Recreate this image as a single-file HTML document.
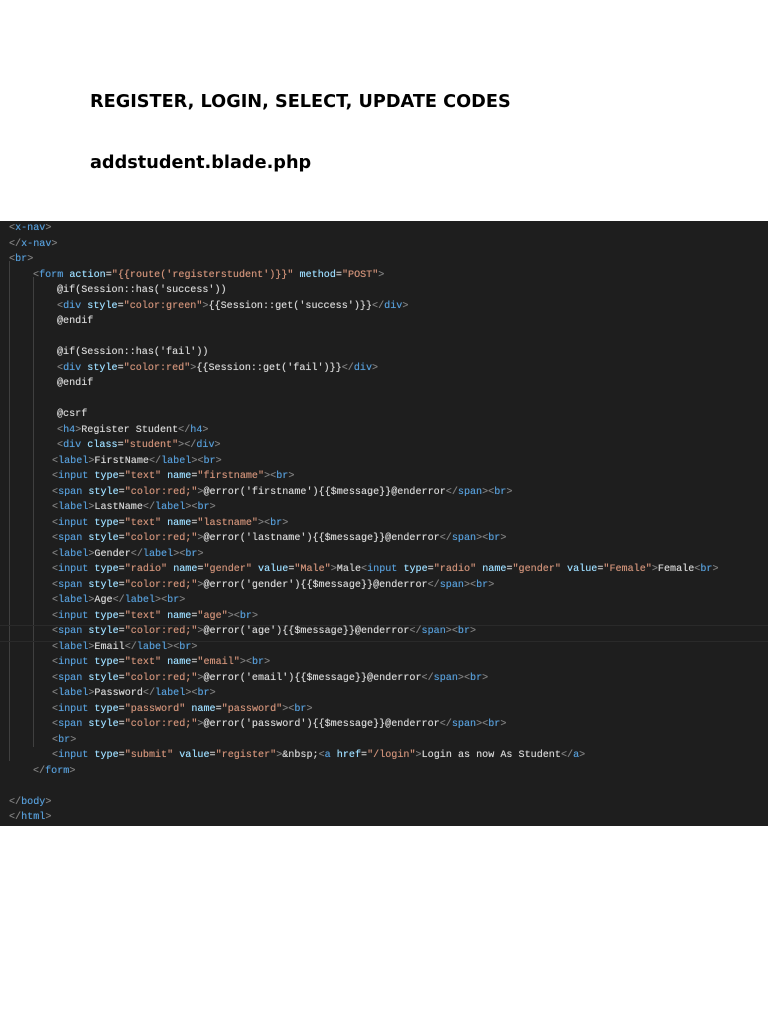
<!DOCTYPE html>
<html><head><meta charset="utf-8"><style>
html,body{margin:0;padding:0;background:#fff;width:768px;height:1024px;overflow:hidden}
h1{position:absolute;left:90px;margin:0;font:bold 17.7px "DejaVu Sans",sans-serif;color:#000;white-space:nowrap}
#code{position:absolute;left:0;top:221px;width:768px;height:605px;background:#1e1e1e;overflow:hidden}
#in{position:absolute;left:0;top:4px;width:768px;height:600px}
.l{position:absolute;height:15.5px;line-height:15.5px;font:10.1px "Liberation Mono",monospace;white-space:pre;color:#d4d4d4;text-shadow:0 0 0.4px currentColor}
.g{position:absolute;width:1px;background:#404040}
.p{color:#808080}.t{color:#569cd6}.a{color:#9cdcfe}.s{color:#ce9178}.w{color:#d4d4d4}
</style></head><body>
<h1 style="top:92px">REGISTER, LOGIN, SELECT, UPDATE CODES</h1>
<h1 style="top:153px">addstudent.blade.php</h1>
<div id="code">
<div id="in">
<div class="g" style="left:9px;top:36px;height:500px"></div>
<div class="g" style="left:33px;top:52px;height:470px"></div>
<div style="position:absolute;left:0;top:400px;width:768px;height:15px;border-top:1px solid #2a2a2a;border-bottom:1px solid #2a2a2a"></div>
<div class="l" style="top:-2px;left:9px"><span class="p">&lt;</span><span class="t">x-nav</span><span class="p">&gt;</span></div>
<div class="l" style="top:13.5px;left:9px"><span class="p">&lt;/</span><span class="t">x-nav</span><span class="p">&gt;</span></div>
<div class="l" style="top:29px;left:9px"><span class="p">&lt;</span><span class="t">br</span><span class="p">&gt;</span></div>
<div class="l" style="top:44.5px;left:33px"><span class="p">&lt;</span><span class="t">form</span> <span class="a">action</span>=<span class="s">"{{route('registerstudent')}}"</span> <span class="a">method</span>=<span class="s">"POST"</span><span class="p">&gt;</span></div>
<div class="l" style="top:60px;left:57px">@if(Session::has('success'))</div>
<div class="l" style="top:75.5px;left:57px"><span class="p">&lt;</span><span class="t">div</span> <span class="a">style</span>=<span class="s">"color:green"</span><span class="p">&gt;</span>{{Session::get('success')}}<span class="p">&lt;/</span><span class="t">div</span><span class="p">&gt;</span></div>
<div class="l" style="top:91px;left:57px">@endif</div>
<div class="l" style="top:122px;left:57px">@if(Session::has('fail'))</div>
<div class="l" style="top:137.5px;left:57px"><span class="p">&lt;</span><span class="t">div</span> <span class="a">style</span>=<span class="s">"color:red"</span><span class="p">&gt;</span>{{Session::get('fail')}}<span class="p">&lt;/</span><span class="t">div</span><span class="p">&gt;</span></div>
<div class="l" style="top:153px;left:57px">@endif</div>
<div class="l" style="top:184px;left:57px">@csrf</div>
<div class="l" style="top:199.5px;left:57px"><span class="p">&lt;</span><span class="t">h4</span><span class="p">&gt;</span>Register Student<span class="p">&lt;/</span><span class="t">h4</span><span class="p">&gt;</span></div>
<div class="l" style="top:215px;left:57px"><span class="p">&lt;</span><span class="t">div</span> <span class="a">class</span>=<span class="s">"student"</span><span class="p">&gt;&lt;/</span><span class="t">div</span><span class="p">&gt;</span></div>
<div class="l" style="top:230.5px;left:52px"><span class="p">&lt;</span><span class="t">label</span><span class="p">&gt;</span>FirstName<span class="p">&lt;/</span><span class="t">label</span><span class="p">&gt;&lt;</span><span class="t">br</span><span class="p">&gt;</span></div>
<div class="l" style="top:246px;left:52px"><span class="p">&lt;</span><span class="t">input</span> <span class="a">type</span>=<span class="s">"text"</span> <span class="a">name</span>=<span class="s">"firstname"</span><span class="p">&gt;&lt;</span><span class="t">br</span><span class="p">&gt;</span></div>
<div class="l" style="top:261.5px;left:52px"><span class="p">&lt;</span><span class="t">span</span> <span class="a">style</span>=<span class="s">"color:red;"</span><span class="p">&gt;</span>@error('firstname'){{$message}}@enderror<span class="p">&lt;/</span><span class="t">span</span><span class="p">&gt;&lt;</span><span class="t">br</span><span class="p">&gt;</span></div>
<div class="l" style="top:277px;left:52px"><span class="p">&lt;</span><span class="t">label</span><span class="p">&gt;</span>LastName<span class="p">&lt;/</span><span class="t">label</span><span class="p">&gt;&lt;</span><span class="t">br</span><span class="p">&gt;</span></div>
<div class="l" style="top:292.5px;left:52px"><span class="p">&lt;</span><span class="t">input</span> <span class="a">type</span>=<span class="s">"text"</span> <span class="a">name</span>=<span class="s">"lastname"</span><span class="p">&gt;&lt;</span><span class="t">br</span><span class="p">&gt;</span></div>
<div class="l" style="top:308px;left:52px"><span class="p">&lt;</span><span class="t">span</span> <span class="a">style</span>=<span class="s">"color:red;"</span><span class="p">&gt;</span>@error('lastname'){{$message}}@enderror<span class="p">&lt;/</span><span class="t">span</span><span class="p">&gt;&lt;</span><span class="t">br</span><span class="p">&gt;</span></div>
<div class="l" style="top:323.5px;left:52px"><span class="p">&lt;</span><span class="t">label</span><span class="p">&gt;</span>Gender<span class="p">&lt;/</span><span class="t">label</span><span class="p">&gt;&lt;</span><span class="t">br</span><span class="p">&gt;</span></div>
<div class="l" style="top:339px;left:52px"><span class="p">&lt;</span><span class="t">input</span> <span class="a">type</span>=<span class="s">"radio"</span> <span class="a">name</span>=<span class="s">"gender"</span> <span class="a">value</span>=<span class="s">"Male"</span><span class="p">&gt;</span>Male<span class="p">&lt;</span><span class="t">input</span> <span class="a">type</span>=<span class="s">"radio"</span> <span class="a">name</span>=<span class="s">"gender"</span> <span class="a">value</span>=<span class="s">"Female"</span><span class="p">&gt;</span>Female<span class="p">&lt;</span><span class="t">br</span><span class="p">&gt;</span></div>
<div class="l" style="top:354.5px;left:52px"><span class="p">&lt;</span><span class="t">span</span> <span class="a">style</span>=<span class="s">"color:red;"</span><span class="p">&gt;</span>@error('gender'){{$message}}@enderror<span class="p">&lt;/</span><span class="t">span</span><span class="p">&gt;&lt;</span><span class="t">br</span><span class="p">&gt;</span></div>
<div class="l" style="top:370px;left:52px"><span class="p">&lt;</span><span class="t">label</span><span class="p">&gt;</span>Age<span class="p">&lt;/</span><span class="t">label</span><span class="p">&gt;&lt;</span><span class="t">br</span><span class="p">&gt;</span></div>
<div class="l" style="top:385.5px;left:52px"><span class="p">&lt;</span><span class="t">input</span> <span class="a">type</span>=<span class="s">"text"</span> <span class="a">name</span>=<span class="s">"age"</span><span class="p">&gt;&lt;</span><span class="t">br</span><span class="p">&gt;</span></div>
<div class="l" style="top:401px;left:52px"><span class="p">&lt;</span><span class="t">span</span> <span class="a">style</span>=<span class="s">"color:red;"</span><span class="p">&gt;</span>@error('age'){{$message}}@enderror<span class="p">&lt;/</span><span class="t">span</span><span class="p">&gt;&lt;</span><span class="t">br</span><span class="p">&gt;</span></div>
<div class="l" style="top:416.5px;left:52px"><span class="p">&lt;</span><span class="t">label</span><span class="p">&gt;</span>Email<span class="p">&lt;/</span><span class="t">label</span><span class="p">&gt;&lt;</span><span class="t">br</span><span class="p">&gt;</span></div>
<div class="l" style="top:432px;left:52px"><span class="p">&lt;</span><span class="t">input</span> <span class="a">type</span>=<span class="s">"text"</span> <span class="a">name</span>=<span class="s">"email"</span><span class="p">&gt;&lt;</span><span class="t">br</span><span class="p">&gt;</span></div>
<div class="l" style="top:447.5px;left:52px"><span class="p">&lt;</span><span class="t">span</span> <span class="a">style</span>=<span class="s">"color:red;"</span><span class="p">&gt;</span>@error('email'){{$message}}@enderror<span class="p">&lt;/</span><span class="t">span</span><span class="p">&gt;&lt;</span><span class="t">br</span><span class="p">&gt;</span></div>
<div class="l" style="top:463px;left:52px"><span class="p">&lt;</span><span class="t">label</span><span class="p">&gt;</span>Password<span class="p">&lt;/</span><span class="t">label</span><span class="p">&gt;&lt;</span><span class="t">br</span><span class="p">&gt;</span></div>
<div class="l" style="top:478.5px;left:52px"><span class="p">&lt;</span><span class="t">input</span> <span class="a">type</span>=<span class="s">"password"</span> <span class="a">name</span>=<span class="s">"password"</span><span class="p">&gt;&lt;</span><span class="t">br</span><span class="p">&gt;</span></div>
<div class="l" style="top:494px;left:52px"><span class="p">&lt;</span><span class="t">span</span> <span class="a">style</span>=<span class="s">"color:red;"</span><span class="p">&gt;</span>@error('password'){{$message}}@enderror<span class="p">&lt;/</span><span class="t">span</span><span class="p">&gt;&lt;</span><span class="t">br</span><span class="p">&gt;</span></div>
<div class="l" style="top:509.5px;left:52px"><span class="p">&lt;</span><span class="t">br</span><span class="p">&gt;</span></div>
<div class="l" style="top:525px;left:52px"><span class="p">&lt;</span><span class="t">input</span> <span class="a">type</span>=<span class="s">"submit"</span> <span class="a">value</span>=<span class="s">"register"</span><span class="p">&gt;</span>&amp;nbsp;<span class="p">&lt;</span><span class="t">a</span> <span class="a">href</span>=<span class="s">"/login"</span><span class="p">&gt;</span>Login as now As Student<span class="p">&lt;/</span><span class="t">a</span><span class="p">&gt;</span></div>
<div class="l" style="top:540.5px;left:33px"><span class="p">&lt;/</span><span class="t">form</span><span class="p">&gt;</span></div>
<div class="l" style="top:571.5px;left:9px"><span class="p">&lt;/</span><span class="t">body</span><span class="p">&gt;</span></div>
<div class="l" style="top:587px;left:9px"><span class="p">&lt;/</span><span class="t">html</span><span class="p">&gt;</span></div>
</div>
</div>
</body></html>
